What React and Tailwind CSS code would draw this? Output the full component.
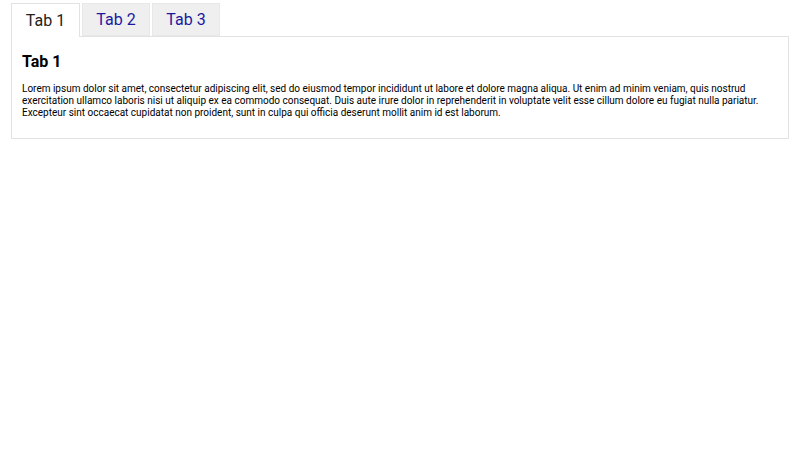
// Simple tab strip with a bordered content panel.
import { useState } from "react";

const tabs = [
  { id: 1, label: "Tab 1" },
  { id: 2, label: "Tab 2" },
  { id: 3, label: "Tab 3" },
];

const lorem =
  "Lorem ipsum dolor sit amet, consectetur adipiscing elit, sed do eiusmod tempor incididunt ut labore et dolore magna aliqua. Ut enim ad minim veniam, quis nostrud exercitation ullamco laboris nisi ut aliquip ex ea commodo consequat. Duis aute irure dolor in reprehenderit in voluptate velit esse cillum dolore eu fugiat nulla pariatur. Excepteur sint occaecat cupidatat non proident, sunt in culpa qui officia deserunt mollit anim id est laborum.";

function App() {
  const [active, setActive] = useState(1);
  const current = tabs.find((t) => t.id === active);

  return (
    <div className="min-h-[450px] bg-white px-[11px] pt-[3px] font-['Roboto',sans-serif]">
      <div className="flex gap-[2px]">
        {tabs.map((t) => (
          <button
            key={t.id}
            onClick={() => setActive(t.id)}
            className={
              t.id === active
                ? "relative z-10 -mb-px h-[34px] w-[69px] border border-b-0 border-[#e2e2e2] bg-white text-[16px] text-[#222]"
                : "h-[33px] w-[68px] border border-[#e8e8e8] bg-[#efefef] text-[16px] text-[#1a1aa0]"
            }
          >
            {t.label}
          </button>
        ))}
      </div>
      <div className="border border-[#e2e2e2] px-[10px] pt-[15px] pb-[19px]">
        <h3 className="text-[16px] font-bold leading-[20px] text-black">{current.label}</h3>
        <p className="mt-[11px] text-[10px] leading-[12px] text-black">{lorem}</p>
      </div>
    </div>
  );
}

export default App;
